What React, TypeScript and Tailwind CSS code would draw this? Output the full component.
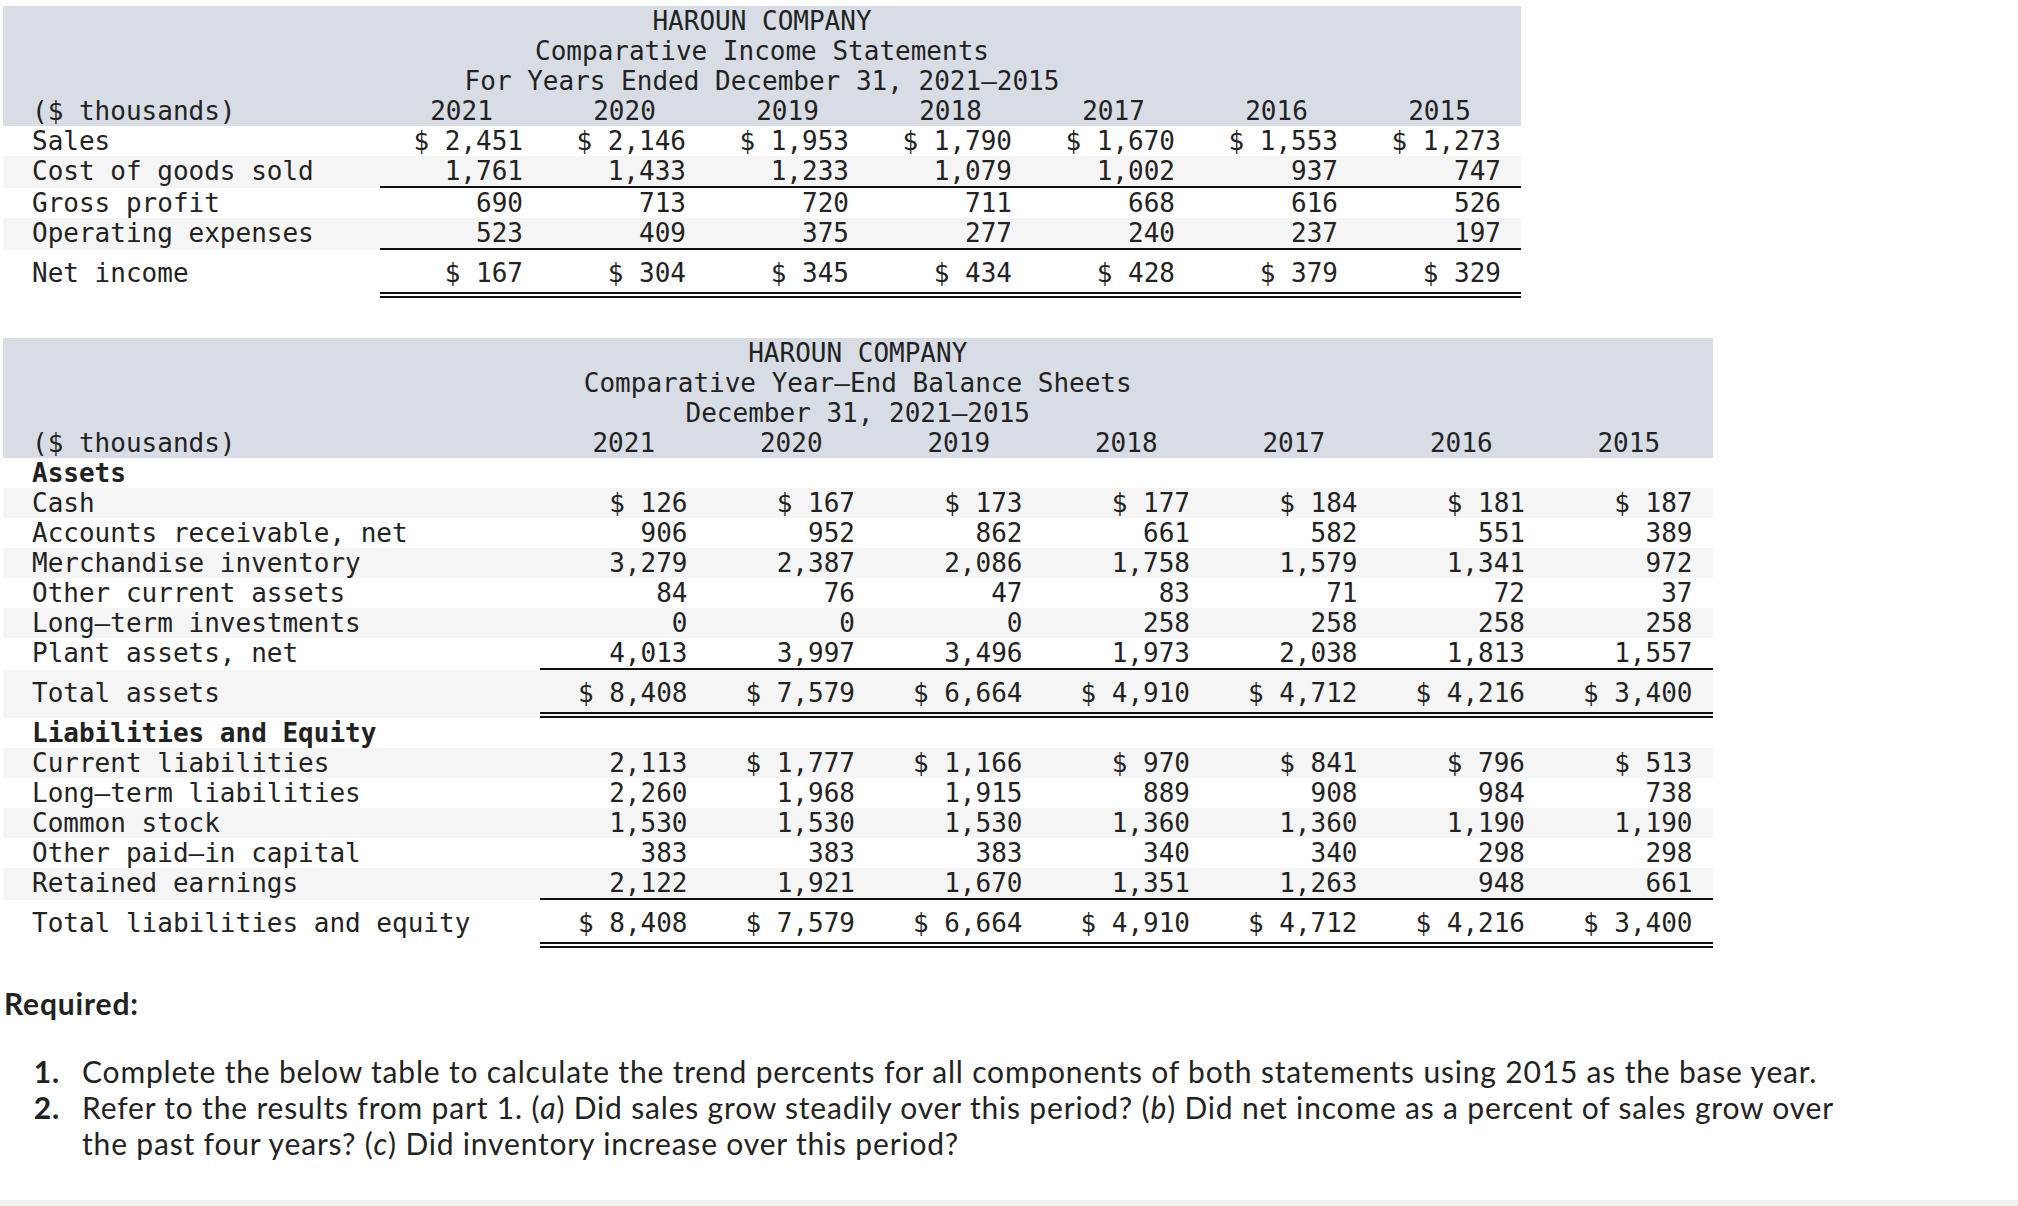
import React from 'react';

type Line = 'none' | 'single' | 'double';

interface Row {
  label: string;
  values?: string[];
  line?: Line;
  bold?: boolean;
  shade?: boolean;
}

const years = ['2021', '2020', '2019', '2018', '2017', '2016', '2015'];

const incomeRows: Row[] = [
  { label: 'Sales', values: ['$ 2,451', '$ 2,146', '$ 1,953', '$ 1,790', '$ 1,670', '$ 1,553', '$ 1,273'] },
  { label: 'Cost of goods sold', values: ['1,761', '1,433', '1,233', '1,079', '1,002', '937', '747'], line: 'single', shade: true },
  { label: 'Gross profit', values: ['690', '713', '720', '711', '668', '616', '526'] },
  { label: 'Operating expenses', values: ['523', '409', '375', '277', '240', '237', '197'], line: 'single', shade: true },
  { label: 'Net income', values: ['$ 167', '$ 304', '$ 345', '$ 434', '$ 428', '$ 379', '$ 329'], line: 'double' },
];

const balanceRows: Row[] = [
  { label: 'Assets', bold: true },
  { label: 'Cash', values: ['$ 126', '$ 167', '$ 173', '$ 177', '$ 184', '$ 181', '$ 187'], shade: true },
  { label: 'Accounts receivable, net', values: ['906', '952', '862', '661', '582', '551', '389'] },
  { label: 'Merchandise inventory', values: ['3,279', '2,387', '2,086', '1,758', '1,579', '1,341', '972'], shade: true },
  { label: 'Other current assets', values: ['84', '76', '47', '83', '71', '72', '37'] },
  { label: 'Long–term investments', values: ['0', '0', '0', '258', '258', '258', '258'], shade: true },
  { label: 'Plant assets, net', values: ['4,013', '3,997', '3,496', '1,973', '2,038', '1,813', '1,557'], line: 'single' },
  { label: 'Total assets', values: ['$ 8,408', '$ 7,579', '$ 6,664', '$ 4,910', '$ 4,712', '$ 4,216', '$ 3,400'], line: 'double', shade: true },
  { label: 'Liabilities and Equity', bold: true },
  { label: 'Current liabilities', values: ['2,113', '$ 1,777', '$ 1,166', '$ 970', '$ 841', '$ 796', '$ 513'], shade: true },
  { label: 'Long–term liabilities', values: ['2,260', '1,968', '1,915', '889', '908', '984', '738'] },
  { label: 'Common stock', values: ['1,530', '1,530', '1,530', '1,360', '1,360', '1,190', '1,190'], shade: true },
  { label: 'Other paid–in capital', values: ['383', '383', '383', '340', '340', '298', '298'] },
  { label: 'Retained earnings', values: ['2,122', '1,921', '1,670', '1,351', '1,263', '948', '661'], line: 'single', shade: true },
  { label: 'Total liabilities and equity', values: ['$ 8,408', '$ 7,579', '$ 6,664', '$ 4,910', '$ 4,712', '$ 4,216', '$ 3,400'], line: 'double' },
];

function StatementRow({ row, cols }: { row: Row; cols: string }) {
  const total = row.line === 'double';
  const lead = total ? 'h-[48px] pt-[4px] leading-[38px]' : 'leading-[30px]';
  return (
    <div className={`grid ${cols} ${row.shade ? 'bg-[#f5f5f5]' : 'bg-white'}`}>
      <div className={`pl-[29px] ${lead} ${row.bold ? 'font-bold' : ''}`}>{row.label}</div>
      {(row.values ?? ['', '', '', '', '', '', '']).map((v, i) => (
        <div
          key={i}
          className={`text-right pr-[20px] ${lead} ${
            row.line === 'single'
              ? 'border-b-2 border-[#111]'
              : total
              ? 'border-b-[6px] border-double border-[#111]'
              : ''
          }`}
        >
          {v}
        </div>
      ))}
    </div>
  );
}

function Statement({
  title,
  rows,
  cols,
  width,
}: {
  title: string[];
  rows: Row[];
  cols: string;
  width: string;
}) {
  return (
    <div className={`${width} ml-[3px]`}>
      <div className="bg-[#d8dce4]">
        {title.map((t) => (
          <div key={t} className="text-center leading-[30px] h-[30px]">
            {t}
          </div>
        ))}
        <div className={`grid ${cols} leading-[30px] h-[30px]`}>
          <div className="pl-[29px]">($ thousands)</div>
          {years.map((y) => (
            <div key={y} className="text-center">
              {y}
            </div>
          ))}
        </div>
      </div>
      {rows.map((r) => (
        <StatementRow key={r.label} row={r} cols={cols} />
      ))}
    </div>
  );
}

export default function App() {
  return (
    <div className="w-[2018px] h-[1206px] bg-white flex flex-col overflow-hidden text-[#222]">
      <div className="pt-[6px] font-['DejaVu_Sans_Mono',monospace] text-[26px] whitespace-pre">
        <Statement
          title={['HAROUN COMPANY', 'Comparative Income Statements', 'For Years Ended December 31, 2021–2015']}
          rows={incomeRows}
          cols="grid-cols-[377px_repeat(7,163px)]"
          width="w-[1518px]"
        />
        <div className="h-[40px]" />
        <Statement
          title={['HAROUN COMPANY', 'Comparative Year–End Balance Sheets', 'December 31, 2021–2015']}
          rows={balanceRows}
          cols="grid-cols-[537px_repeat(7,167.5px)]"
          width="w-[1709.5px]"
        />
      </div>

      <div className="mt-[37px] font-['Lato',sans-serif] text-[30px] tracking-[0.82px] text-[#222]">
        <div className="pl-[4px] font-bold leading-[36px]">Required:</div>
        <div className="mt-[32px] flex flex-col leading-[36px]">
          <div className="flex">
            <div className="w-[60px] text-right font-bold">1.</div>
            <div className="pl-[22px] whitespace-nowrap">
              Complete the below table to calculate the trend percents for all components of both statements using 2015 as the base year.
            </div>
          </div>
          <div className="flex">
            <div className="w-[60px] text-right font-bold">2.</div>
            <div className="pl-[22px] whitespace-nowrap">
              <div>
                Refer to the results from part 1. (<i>a</i>) Did sales grow steadily over this period? (<i>b</i>) Did net income as a percent of sales grow over
              </div>
              <div>
                the past four years? (<i>c</i>) Did inventory increase over this period?
              </div>
            </div>
          </div>
        </div>
      </div>

      <div className="mt-auto h-[6px] bg-[#f2f2f2]" />
    </div>
  );
}
